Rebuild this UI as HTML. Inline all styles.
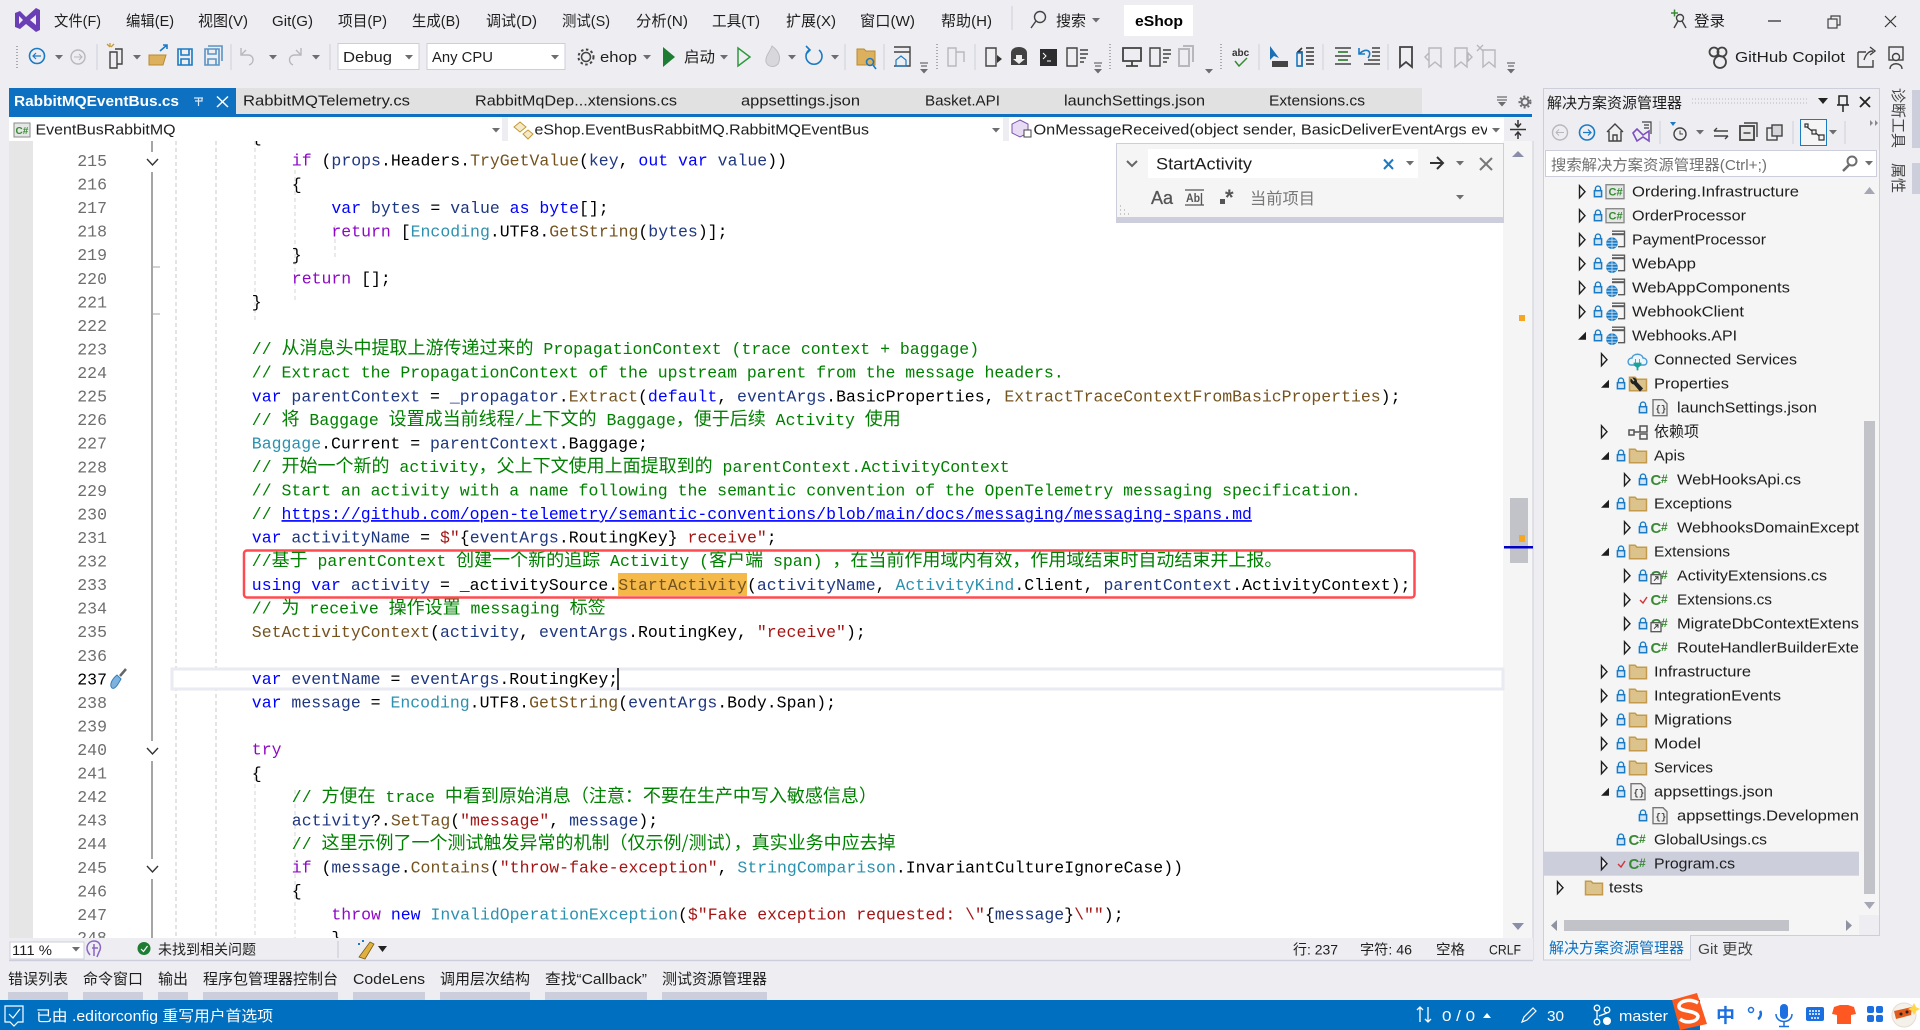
<!DOCTYPE html>
<html lang="zh"><head><meta charset="utf-8"><title>eShop - Visual Studio</title>
<style>
html,body{margin:0;padding:0;background:#eeeef2;overflow:hidden}
svg{display:block}
text{white-space:pre}
.u{font:15px "Liberation Sans","Noto Sans CJK SC",sans-serif;fill:#1e1e1e}
.m{font:16.5px "Liberation Mono","Noto Sans CJK SC",monospace;fill:#000}
.n{font:16.5px "Liberation Mono",monospace;fill:#6e6e6e;text-anchor:end}
.z{font-family:"Noto Sans CJK SC",sans-serif;font-size:18px}
.k{fill:#0000ff}.c{fill:#008000}.t{fill:#2b91af}.s{fill:#a31515}.f{fill:#74531f}.v{fill:#1f377f}.p{fill:#8f08c4}
.l{fill:#0000ff;text-decoration:underline}
.w{font:15px "Liberation Sans","Noto Sans CJK SC",sans-serif;fill:#fff}
.i{fill:none;stroke:#424242;stroke-width:1.4}
.b{fill:none;stroke:#1b7ac4;stroke-width:1.6}
.g{fill:none;stroke:#b8b8bc;stroke-width:1.4}
.tri{fill:#6d6d70}
</style></head><body>
<svg xmlns="http://www.w3.org/2000/svg" width="1920" height="1030" viewBox="0 0 1920 1030">
<defs>
<clipPath id="ed"><rect x="33" y="141" width="1470" height="797"/></clipPath>
<clipPath id="cb3"><rect x="1010" y="117" width="477" height="24"/></clipPath>
<g id="lk"><path d="M-2.6-1V-3a2.6 2.6 0 0 1 5.2 0V-1" fill="none" stroke="#1b7ac4" stroke-width="1.4"/><rect x="-3.6" y="-1" width="7.2" height="6" fill="#cfe6f8" stroke="#1b7ac4" stroke-width="1.5"/></g>
<path id="ex" d="M-2.5-6L3 0L-2.5 6Z" fill="#f5f5f5" stroke="#1e1e1e" stroke-width="1.4"/>
<path id="en" d="M4-4V4H-4Z" fill="#1e1e1e"/>
<path id="fld" d="M-8.5-6.5H-3L-1-4.5H8.5V7H-8.5Z" fill="#dcc38c" stroke="#c49a4c" stroke-width="1.5"/>
<g id="csp"><rect x="-9" y="-7" width="18" height="14" fill="#e4e8e4" stroke="#8a8a8a" stroke-width="1.4"/><text x="-6.5" y="4" style="font:bold 11px 'Liberation Sans',sans-serif;fill:#388a34">C#</text></g>
<g id="web"><path d="M-3-8.5H9.5V7H3" fill="#f5f5f5" stroke="#5a5a5a" stroke-width="1.4"/><path d="M-3-5.5H9.5" stroke="#5a5a5a" stroke-width="2"/><circle cx="-3" cy="3.5" r="5.8" fill="#1b7ac4"/><path d="M-8.8 3.5H2.8M-3-2.3V9.3M-7.5 0.5H1.5M-7.5 6.5H1.5" stroke="#cfe6f8" stroke-width=".8"/></g>
<g id="cs"><text x="-9.5" y="5.5" style="font:bold 15px 'Liberation Sans',sans-serif;fill:#388a34">C</text><text x="1" y="3.5" style="font:bold 12px 'Liberation Sans',sans-serif;fill:#388a34">#</text></g>
<g id="csl"><use href="#cs"/><rect x="-9" y="-1" width="10" height="9" fill="#f5f5f5" stroke="#555" stroke-width="1.3"/><path d="M-6 5L-2 1M-5 1H-2V4" fill="none" stroke="#333" stroke-width="1"/></g>
<g id="js"><path d="M-7-8H3L7-4V8H-7Z" fill="#f0f0f0" stroke="#777" stroke-width="1.4"/><text x="-4.5" y="4" style="font:bold 9px 'Liberation Mono',monospace;fill:#444">{}</text></g>
<path id="dn" d="M-4-2H4L0 2.5Z" class="tri"/>
</defs>

<rect width="1920" height="1030" fill="#eeeef2"/>

<!-- Title / menu -->
<path d="M15 13L20 11L26 17L36 8L40 10V30L36 32L26 24L20 29L15 27Z" fill="#6a3fb5"/><path d="M19 16V24L23 20ZM30 20L36 15V25Z" fill="#eeeef2"/>
<g class="u" style="font-size:15px">
<text class="u" x="54" y="26" textLength="47" lengthAdjust="spacingAndGlyphs">文件(F)</text>
<text class="u" x="126" y="26" textLength="48" lengthAdjust="spacingAndGlyphs">编辑(E)</text>
<text class="u" x="198" y="26" textLength="50" lengthAdjust="spacingAndGlyphs">视图(V)</text>
<text class="u" x="272" y="26" textLength="41" lengthAdjust="spacingAndGlyphs">Git(G)</text>
<text class="u" x="338" y="26" textLength="49" lengthAdjust="spacingAndGlyphs">项目(P)</text>
<text class="u" x="412" y="26" textLength="48" lengthAdjust="spacingAndGlyphs">生成(B)</text>
<text class="u" x="486" y="26" textLength="51" lengthAdjust="spacingAndGlyphs">调试(D)</text>
<text class="u" x="562" y="26" textLength="48" lengthAdjust="spacingAndGlyphs">测试(S)</text>
<text class="u" x="636" y="26" textLength="52" lengthAdjust="spacingAndGlyphs">分析(N)</text>
<text class="u" x="712" y="26" textLength="48" lengthAdjust="spacingAndGlyphs">工具(T)</text>
<text class="u" x="786" y="26" textLength="50" lengthAdjust="spacingAndGlyphs">扩展(X)</text>
<text class="u" x="860" y="26" textLength="55" lengthAdjust="spacingAndGlyphs">窗口(W)</text>
<text class="u" x="941" y="26" textLength="51" lengthAdjust="spacingAndGlyphs">帮助(H)</text>
</g>
<path d="M1012 6V30" stroke="#cccedb"/>
<circle cx="1040" cy="17" r="5.5" class="i"/><path d="M1036 21L1031 28" class="i"/>
<text class="u" x="1056" y="26" textLength="30" lengthAdjust="spacingAndGlyphs">搜索</text><use href="#dn" x="1096" y="20"/>
<rect x="1124" y="5" width="69" height="31" fill="#fff"/>
<text class="u" x="1135" y="26" textLength="48" lengthAdjust="spacingAndGlyphs" style="font-weight:bold;fill:#000">eShop</text>
<path d="M1671 13h7M1674.500 9.500v7" stroke="#388a34" stroke-width="1.500"/><circle cx="1680" cy="18" r="3.500" class="i"/><path d="M1674 28L1678 21M1686 28L1682 21" class="i"/>
<text class="u" x="1694" y="26" textLength="31" lengthAdjust="spacingAndGlyphs">登录</text>
<path d="M1768 21H1781" stroke="#333" stroke-width="1.300"/>
<rect x="1828" y="19" width="9" height="9" class="i" style="stroke-width:1.200"/><path d="M1831 19V16H1840V25H1837" class="i" style="stroke-width:1.200"/>
<path d="M1885 16L1896 27M1896 16L1885 27" stroke="#333" stroke-width="1.200"/>

<!-- Toolbar -->
<path d="M17 46V68" stroke="#a9a9b0" stroke-width="2" stroke-dasharray="1 2"/>
<circle cx="37" cy="56" r="7.500" class="b"/><path d="M41 56H33M36 53L33 56L36 59" class="b" style="stroke-width:1.200"/><use href="#dn" x="59" y="57"/>
<circle cx="78" cy="57" r="7" class="g"/><path d="M74 57H82M79 54L82 57L79 60" class="g" style="stroke-width:1.100"/>
<path d="M97 44V70" stroke="#cccedb"/>
<path d="M110 52H117V68H110ZM115 49H122V64H117" class="i"/><path d="M107 44l3 3M110 43v4M114 44l-3 3" stroke="#c99a30" stroke-width="1.300"/><use href="#dn" x="137" y="57"/>
<path d="M149 65V55H166L163 65Z" fill="#dcb05c" stroke="#b98a30"/><path d="M160 51L167 45M163 45H167V49" class="b"/>
<path d="M178 49H192V65H178ZM181 49V55H189V49M181 65V59H189V65" class="b"/>
<path d="M205 49H219V65H205ZM208 49V54H216V49M208 65V59H216V65" class="b" style="stroke:#5a93c4"/><path d="M208 46H222V61" class="b" style="stroke:#5a93c4"/>
<path d="M231 44V70" stroke="#cccedb"/>
<path d="M241 48V55H248C254 55 255 63 249 65M241 55L246 50" class="g"/><use href="#dn" x="273" y="57"/>
<path d="M301 48V55H295C288 55 288 63 293 65M301 55L296 50" class="g"/><use href="#dn" x="316" y="57"/>
<path d="M330 44V70" stroke="#cccedb"/>
<rect x="338" y="43.500" width="81" height="26" fill="#fff" stroke="#cccedb"/><text class="u" x="343" y="62" textLength="49" lengthAdjust="spacingAndGlyphs">Debug</text><use href="#dn" x="409" y="57"/>
<rect x="427" y="43.500" width="138" height="26" fill="#fff" stroke="#cccedb"/><text class="u" x="432" y="62" textLength="61" lengthAdjust="spacingAndGlyphs">Any CPU</text><use href="#dn" x="555" y="57"/>
<circle cx="586" cy="57" r="4.500" class="i" style="stroke-width:1.500"/><circle cx="586" cy="57" r="7.500" fill="none" stroke="#424242" stroke-width="2" stroke-dasharray="2.500 2.500"/>
<text class="u" x="600" y="62" textLength="37" lengthAdjust="spacingAndGlyphs">ehop</text><use href="#dn" x="647" y="57"/>
<path d="M663 47L675 57L663 67Z" fill="#1e7d32"/>
<text class="u" x="684" y="62" textLength="31" lengthAdjust="spacingAndGlyphs">启动</text><use href="#dn" x="724" y="57"/>
<path d="M738 48L750 57L738 66Z" fill="none" stroke="#2e9a3e" stroke-width="1.500"/>
<path d="M772 46C780 52 781 58 778 64C774 68 768 67 766 62C765 56 770 52 772 46Z" fill="#d8d8dc" stroke="#bdbdc2"/><use href="#dn" x="792" y="57"/>
<path d="M809 50A8 8 0 1 0 819 50" class="b"/><path d="M806 46L810 50L806 54" class="b"/><use href="#dn" x="835" y="57"/>
<path d="M845 44V70" stroke="#cccedb"/>
<path d="M857 49H864L866 51H875V65H857Z" fill="#dcb05c" stroke="#b98a30"/><circle cx="870" cy="62" r="3.500" class="b"/><path d="M873 65L876 69" class="b"/>
<path d="M884 44V70" stroke="#cccedb"/>
<path d="M894 47H910V66H894M894 52H910" class="i"/><path d="M896 66V60L901 56L906 60V66Z" class="b" style="stroke-width:1.200"/>
<path d="M920 63H928M921 66H927" stroke="#6d6d70" stroke-width="1.300"/><use href="#dn" x="924" y="71"/>
<path d="M937 44V70" stroke="#a9a9b0" stroke-width="2" stroke-dasharray="1 2"/>
<path d="M948 48H956V66H948ZM956 52H964V62" class="g"/>
<path d="M975 44V70" stroke="#cccedb"/>
<path d="M986 48H996V66H986Z" class="i"/><path d="M997 55L1002 59L997 63Z" fill="#333"/>
<path d="M1011 53C1011 45 1027 45 1027 53V65H1011Z" fill="#424242"/><path d="M1016 55H1022V59H1025L1019 64L1013 59H1016Z" fill="#eee"/>
<rect x="1040" y="49" width="17" height="17" fill="#2d2d30"/><path d="M1043 53L1046 56L1043 59M1047 61H1051" stroke="#fff" fill="none"/>
<path d="M1067 48H1077V66H1067ZM1080 50H1088M1080 54H1088M1080 58H1086M1080 62H1084" class="i"/>
<path d="M1094 63H1102M1095 66H1101" stroke="#6d6d70" stroke-width="1.300"/><use href="#dn" x="1098" y="71"/>
<path d="M1110 44V70" stroke="#a9a9b0" stroke-width="2" stroke-dasharray="1 2"/>
<path d="M1123 48H1141V61H1123ZM1132 61V66M1126 66H1138" class="i" style="stroke-width:1.800"/>
<path d="M1150 48H1160V66H1150ZM1163 50H1171M1163 54H1171M1163 58H1169M1163 62H1167" class="i"/>
<path d="M1179 49H1189V66H1179ZM1183 46H1193V62" class="g" style="stroke-width:2"/><use href="#dn" x="1209" y="71"/>
<path d="M1221 44V70" stroke="#a9a9b0" stroke-width="2" stroke-dasharray="1 2"/>
<text x="1232" y="56" style="font:bold 10px 'Liberation Sans',sans-serif;fill:#333">abc</text><path d="M1235 61L1239 66L1247 58" fill="none" stroke="#388a34" stroke-width="1.500"/>
<path d="M1259 44V70" stroke="#cccedb"/>
<path d="M1270 46V60L1274 56L1279 58Z" fill="#1b6fb5"/><path d="M1272 61H1288V67H1272Z" fill="#444"/>
<path d="M1297 52H1302V66H1297M1298 52L1302 48M1306 48H1314M1306 52H1314M1306 56H1314M1306 60H1314M1306 64H1314" class="b" style="stroke:#333"/><path d="M1297 53h5v13h-5z" class="b"/>
<path d="M1323 44V70" stroke="#cccedb"/>
<path d="M1335 48H1351M1338 52H1348M1335 56H1351M1338 60H1348M1335 64H1351" stroke="#424242" stroke-width="1.400"/><path d="M1338 52H1348M1338 60H1348" stroke="#388a34" stroke-width="1.400"/>
<path d="M1359 54C1366 47 1373 51 1368 58M1359 48V54H1365" class="b"/><path d="M1372 48H1380M1372 52H1380M1372 56H1380M1368 60H1380M1364 64H1380" stroke="#424242" stroke-width="1.400"/>
<path d="M1388 44V70" stroke="#cccedb"/>
<path d="M1400 47H1412V67L1406 62L1400 67Z" class="i" style="stroke-width:1.800"/>
<path d="M1429 48H1441V67L1435 62L1429 67ZM1425 57L1429 53V61Z" class="g"/>
<path d="M1455 48H1467V67L1461 62L1455 67ZM1472 57L1468 53V61Z" class="g"/>
<path d="M1483 50H1495V67L1489 62L1483 67ZM1477 45L1483 51M1483 45L1477 51" class="g"/>
<path d="M1507 63H1515M1508 66H1514" stroke="#6d6d70" stroke-width="1.300"/><use href="#dn" x="1511" y="71"/>
<circle cx="1714" cy="52" r="4.500" class="i" style="stroke-width:1.800"/><circle cx="1722" cy="52" r="4.500" class="i" style="stroke-width:1.800"/><circle cx="1720" cy="62" r="6" class="i" style="stroke-width:1.800"/>
<text class="u" x="1735" y="62" textLength="110" lengthAdjust="spacingAndGlyphs">GitHub Copilot</text>
<path d="M1858 52H1866M1858 52V67H1873V60M1864 60C1866 53 1870 51 1873 51M1870 47L1875 51L1870 55" class="i"/>
<rect x="1889" y="47" width="14" height="13" class="i"/><circle cx="1896" cy="57" r="3.500" class="i" style="fill:#eeeef2"/><path d="M1890 69C1890 62 1902 62 1902 69" class="i"/>

<!-- Document tabs -->
<rect x="236" y="88" width="1186" height="26" fill="#e1e1e1"/>
<rect x="9" y="88" width="227" height="26" fill="#0e70c0"/>
<rect x="9" y="114" width="1523" height="3" fill="#0e70c0"/>
<text class="w" x="14" y="106" textLength="165" lengthAdjust="spacingAndGlyphs" style="font-weight:bold">RabbitMQEventBus.cs</text>
<path d="M194 98H203M198.500 98V106M195 101H202V98" stroke="#d6e6f5" stroke-width="1.200" fill="none"/>
<path d="M217 96.500L228 107M228 96.500L217 107" stroke="#fff" stroke-width="1.500"/>
<text class="u" x="243" y="105.500" textLength="167" lengthAdjust="spacingAndGlyphs">RabbitMQTelemetry.cs</text>
<text class="u" x="475" y="105.500" textLength="202" lengthAdjust="spacingAndGlyphs">RabbitMqDep...xtensions.cs</text>
<text class="u" x="741" y="105.500" textLength="119" lengthAdjust="spacingAndGlyphs">appsettings.json</text>
<text class="u" x="925" y="105.500" textLength="75" lengthAdjust="spacingAndGlyphs">Basket.API</text>
<text class="u" x="1064" y="105.500" textLength="141" lengthAdjust="spacingAndGlyphs">launchSettings.json</text>
<text class="u" x="1269" y="105.500" textLength="96" lengthAdjust="spacingAndGlyphs">Extensions.cs</text>
<path d="M1497 97H1507M1497 100H1507" stroke="#6d6d70" stroke-width="1.300"/><use href="#dn" x="1502" y="104"/>
<circle cx="1525" cy="102" r="3.500" fill="none" stroke="#6d6d70" stroke-width="2"/><circle cx="1525" cy="102" r="5.500" fill="none" stroke="#6d6d70" stroke-width="2" stroke-dasharray="2 2"/>

<!-- Editor -->
<rect x="9" y="141" width="24" height="797" fill="#e6e6e6"/>
<rect x="33" y="141" width="1470" height="797" fill="#fff"/>
<rect x="1503" y="141" width="30" height="797" fill="#f5f5f5"/>
<path d="M1533 141V960" stroke="#cccedb"/>
<path d="M152 141V938" stroke="#a5a5a5" stroke-width="2"/>
<path d="M152 267H160M152 314H160" stroke="#a5a5a5"/>
<path d="M176 141V938M216 141V938" stroke="#c8c8c8" stroke-dasharray="4 3"/>
<path d="M255 141V320M295 170V300M255 770V938M295 790V938" stroke="#d4d4d4" stroke-dasharray="4 3"/>
<path d="M335 225V260" stroke="#d4d4d4" stroke-dasharray="4 3"/>
<rect x="146" y="152" width="13" height="20" fill="#fff"/><path d="M147 159L152.500 165L158 159" fill="none" stroke="#333" stroke-width="1.400"/>
<rect x="146" y="741" width="13" height="20" fill="#fff"/><path d="M147 748L152.500 754L158 748" fill="none" stroke="#333" stroke-width="1.400"/>
<rect x="146" y="859" width="13" height="20" fill="#fff"/><path d="M147 866L152.500 872L158 866" fill="none" stroke="#333" stroke-width="1.400"/>

<rect x="172" y="669" width="1331" height="20" fill="#fff" stroke="#eaeaf2" stroke-width="3"/>
<rect x="618" y="573" width="129" height="23" fill="#f5b94a"/>

<g transform="translate(0 -1.200)">
<text class="n" x="107" y="167.200">215</text><text class="n" x="107" y="190.800">216</text><text class="n" x="107" y="214.300">217</text><text class="n" x="107" y="237.900">218</text><text class="n" x="107" y="261.400">219</text><text class="n" x="107" y="285">220</text><text class="n" x="107" y="308.600">221</text><text class="n" x="107" y="332.100">222</text><text class="n" x="107" y="355.700">223</text><text class="n" x="107" y="379.200">224</text><text class="n" x="107" y="402.800">225</text><text class="n" x="107" y="426.400">226</text><text class="n" x="107" y="449.900">227</text><text class="n" x="107" y="473.500">228</text><text class="n" x="107" y="497">229</text><text class="n" x="107" y="520.600">230</text><text class="n" x="107" y="544.200">231</text><text class="n" x="107" y="567.700">232</text><text class="n" x="107" y="591.300">233</text><text class="n" x="107" y="614.800">234</text><text class="n" x="107" y="638.400">235</text><text class="n" x="107" y="662">236</text><text class="n" x="107" y="685.500" style="fill:#000">237</text><text class="n" x="107" y="709.100">238</text><text class="n" x="107" y="732.600">239</text><text class="n" x="107" y="756.200">240</text><text class="n" x="107" y="779.800">241</text><text class="n" x="107" y="803.300">242</text><text class="n" x="107" y="826.900">243</text><text class="n" x="107" y="850.400">244</text><text class="n" x="107" y="874">245</text><text class="n" x="107" y="897.600">246</text><text class="n" x="107" y="921.100">247</text>
</g>
<g clip-path="url(#ed)">
<g transform="translate(0.800 -1.500)">
<text class="n" x="106" y="944.700">248</text>
<text class="m" x="251" y="143.600">{</text>
<text class="m" x="291" y="167.200"><tspan class="p">if</tspan> (<tspan class="v">props</tspan>.Headers.<tspan class="f">TryGetValue</tspan>(<tspan class="v">key</tspan>, <tspan class="k">out</tspan> <tspan class="k">var</tspan> <tspan class="v">value</tspan>))</text>
<text class="m" x="291" y="190.800">{</text>
<text class="m" x="330.600" y="214.300"><tspan class="k">var</tspan> <tspan class="v">bytes</tspan> = <tspan class="v">value</tspan> <tspan class="k">as</tspan> <tspan class="k">byte</tspan>[];</text>
<text class="m" x="330.600" y="237.900"><tspan class="p">return</tspan> [<tspan class="t">Encoding</tspan>.UTF8.<tspan class="f">GetString</tspan>(<tspan class="v">bytes</tspan>)];</text>
<text class="m" x="291" y="261.400">}</text>
<text class="m" x="291" y="285"><tspan class="p">return</tspan> [];</text>
<text class="m" x="251" y="308.600">}</text>
<text class="m c" x="251" y="355.700">// <tspan class="z">从消息头中提取上游传递过来的</tspan> PropagationContext (trace context + baggage)</text>
<text class="m c" x="251" y="379.200">// Extract the PropagationContext of the upstream parent from the message headers.</text>
<text class="m" x="251" y="402.800"><tspan class="k">var</tspan> <tspan class="v">parentContext</tspan> = <tspan class="v">_propagator</tspan>.<tspan class="f">Extract</tspan>(<tspan class="k">default</tspan>, <tspan class="v">eventArgs</tspan>.BasicProperties, <tspan class="f">ExtractTraceContextFromBasicProperties</tspan>);</text>
<text class="m c" x="251" y="426.400">// <tspan class="z">将</tspan> Baggage <tspan class="z">设置成当前线程</tspan>/<tspan class="z">上下文的</tspan> Baggage<tspan class="z">，便于后续</tspan> Activity <tspan class="z">使用</tspan></text>
<text class="m" x="251" y="449.900"><tspan class="t">Baggage</tspan>.Current = <tspan class="v">parentContext</tspan>.Baggage;</text>
<text class="m c" x="251" y="473.500">// <tspan class="z">开始一个新的</tspan> activity<tspan class="z">，父上下文使用上面提取到的</tspan> parentContext.ActivityContext</text>
<text class="m c" x="251" y="497">// Start an activity with a name following the semantic convention of the OpenTelemetry messaging specification.</text>
<text class="m c" x="251" y="520.600">// <tspan class="l">https://github.com/open-telemetry/semantic-conventions/blob/main/docs/messaging/messaging-spans.md</tspan></text>
<text class="m" x="251" y="544.200"><tspan class="k">var</tspan> <tspan class="v">activityName</tspan> = <tspan class="s">$"</tspan>{<tspan class="v">eventArgs</tspan>.RoutingKey}<tspan class="s"> receive"</tspan>;</text>
<text class="m c" x="251" y="567.700">//<tspan class="z">基于</tspan> parentContext <tspan class="z">创建一个新的追踪</tspan> Activity (<tspan class="z">客户端</tspan> span) <tspan class="z">，在当前作用域内有效，作用域结束时自动结束并上报。</tspan></text>
<text class="m" x="251" y="591.300"><tspan class="k">using</tspan> <tspan class="k">var</tspan> <tspan class="v">activity</tspan> = _activitySource.<tspan class="f">StartActivity</tspan>(<tspan class="v">activityName</tspan>, <tspan class="t">ActivityKind</tspan>.Client, <tspan class="v">parentContext</tspan>.ActivityContext);</text>
<text class="m c" x="251" y="614.800">// <tspan class="z">为</tspan> receive <tspan class="z">操作设置</tspan> messaging <tspan class="z">标签</tspan></text>
<text class="m" x="251" y="638.400"><tspan class="f">SetActivityContext</tspan>(<tspan class="v">activity</tspan>, <tspan class="v">eventArgs</tspan>.RoutingKey, <tspan class="s">"receive"</tspan>);</text>
<text class="m" x="251" y="685.500"><tspan class="k">var</tspan> <tspan class="v">eventName</tspan> = <tspan class="v">eventArgs</tspan>.RoutingKey;</text>
<text class="m" x="251" y="709.100"><tspan class="k">var</tspan> <tspan class="v">message</tspan> = <tspan class="t">Encoding</tspan>.UTF8.<tspan class="f">GetString</tspan>(<tspan class="v">eventArgs</tspan>.Body.Span);</text>
<text class="m" x="251" y="756.200"><tspan class="p">try</tspan></text>
<text class="m" x="251" y="779.800">{</text>
<text class="m c" x="291" y="803.300">// <tspan class="z">方便在</tspan> trace <tspan class="z">中看到原始消息（注意：不要在生产中写入敏感信息）</tspan></text>
<text class="m" x="291" y="826.900"><tspan class="v">activity</tspan>?.<tspan class="f">SetTag</tspan>(<tspan class="s">"message"</tspan>, <tspan class="v">message</tspan>);</text>
<text class="m c" x="291" y="850.400">// <tspan class="z">这里示例了一个测试触发异常的机制（仅示例/测试），真实业务中应去掉</tspan></text>
<text class="m" x="291" y="874"><tspan class="p">if</tspan> (<tspan class="v">message</tspan>.<tspan class="f">Contains</tspan>(<tspan class="s">"throw-fake-exception"</tspan>, <tspan class="t">StringComparison</tspan>.InvariantCultureIgnoreCase))</text>
<text class="m" x="291" y="897.600">{</text>
<text class="m" x="330.600" y="921.100"><tspan class="p">throw</tspan> <tspan class="k">new</tspan> <tspan class="t">InvalidOperationException</tspan>(<tspan class="s">$"Fake exception requested: \"</tspan>{<tspan class="v">message</tspan>}<tspan class="s">\""</tspan>);</text>
<text class="m" x="330.600" y="944.700">}</text>
</g>
</g>
<path d="M618 668V690" stroke="#000" stroke-width="1.500"/>
<rect x="244" y="550.500" width="1170.500" height="47" rx="3" fill="none" stroke="#ff4b50" stroke-width="2.500"/>
<g transform="translate(120 680)"><path d="M-8 8C-11 5-8-1-3-5L1-1C-2 4-5 10-8 8Z" fill="#7fb3de" stroke="#2f7fbf"/><path d="M0-4L6-11" stroke="#666" stroke-width="2.500"/></g>

<!-- Editor scrollbar -->
<path d="M1512 157H1524L1518 151Z" fill="#8a8ea8"/>
<path d="M1512 923H1524L1518 930Z" fill="#8a8ea8"/>
<rect x="1510" y="498" width="18" height="65" fill="#c2c3c9"/>
<rect x="1519" y="315" width="6" height="6" fill="#f5a623"/>
<rect x="1519" y="535" width="6" height="7" fill="#f5a623"/>
<rect x="1504" y="546" width="29" height="2.500" fill="#0000c8"/>

<!-- Find widget -->
<rect x="1116.500" y="143.500" width="387" height="79" fill="#f5f5f5" stroke="#cccedb"/>
<rect x="1117" y="217" width="386" height="5" fill="#cccedb"/>
<path d="M1127 161L1132 166L1137 161" fill="none" stroke="#666" stroke-width="2"/>
<rect x="1148" y="149" width="270" height="29" fill="#fff"/>
<text class="u" x="1156" y="169.500" style="font-size:17px" textLength="96" lengthAdjust="spacingAndGlyphs">StartActivity</text>
<path d="M1384 159.500L1393 169M1393 159.500L1384 169" stroke="#1b7ac4" stroke-width="2"/>
<use href="#dn" x="1410" y="163"/>
<path d="M1430 163H1443M1437 157L1443 163L1437 169" fill="none" stroke="#333" stroke-width="2"/>
<use href="#dn" x="1460" y="163"/>
<path d="M1480 158L1492 170M1492 158L1480 170" stroke="#777" stroke-width="2"/>
<text x="1151" y="204" style="font:18px 'Liberation Sans',sans-serif;fill:#555;stroke:#555;stroke-width:.3">Aa</text>
<text x="1186" y="202" style="font:bold 12px 'Liberation Sans',sans-serif;fill:#555" textLength="17" lengthAdjust="spacingAndGlyphs">Ab|</text><path d="M1185 190H1204M1185 205H1204" stroke="#555" stroke-width="1.200"/>
<rect x="1220" y="199" width="5" height="5" fill="#555"/><text x="1225" y="205" style="font:bold 22px 'Liberation Sans',sans-serif;fill:#555">*</text>
<text class="u" x="1250" y="204" style="font-size:16px;fill:#777" textLength="65" lengthAdjust="spacingAndGlyphs">当前项目</text>
<use href="#dn" x="1460" y="197"/>
<path d="M1120 206h1M1120 210h1M1120 214h1M1124 210h1M1124 214h1M1128 214h1" stroke="#999"/>

<!-- Nav bar -->
<rect x="9" y="117" width="1523" height="24" fill="#eeeef2"/>
<rect x="9" y="117" width="493" height="24" fill="#fff"/>
<rect x="508" y="117" width="495" height="24" fill="#fff"/>
<rect x="1009" y="117" width="495" height="24" fill="#fff"/>
<rect x="14" y="123" width="16" height="14" fill="#e4e8e4" stroke="#8a8a8a"/><text x="15.500" y="134" style="font:bold 10px 'Liberation Sans',sans-serif;fill:#388a34">C#</text>
<text class="u" x="35.500" y="134.500" textLength="140" lengthAdjust="spacingAndGlyphs">EventBusRabbitMQ</text>
<use href="#dn" x="496" y="130"/>
<path d="M520 122L526 127L520 132L514 127ZM528 130L533 134L528 139L523 134Z" fill="#f5e9c8" stroke="#c49a30"/>
<text class="u" x="534.500" y="134.500" textLength="334.500" lengthAdjust="spacingAndGlyphs">eShop.EventBusRabbitMQ.RabbitMQEventBus</text>
<use href="#dn" x="996" y="130"/>
<path d="M1020 120L1028 124V133L1020 137L1012 133V124Z" fill="#e7dcf4" stroke="#7b52ab"/><rect x="1024" y="130" width="7" height="7" fill="#fff" stroke="#444"/>
<g clip-path="url(#cb3)"><text class="u" x="1033.500" y="134.500" textLength="464" lengthAdjust="spacingAndGlyphs">OnMessageReceived(object sender, BasicDeliverEventArgs eve</text></g>
<use href="#dn" x="1496" y="130"/>
<path d="M1510 129.500H1526M1518 120V126M1515 123.500L1518 127L1521 123.500M1518 139V133M1515 135.500L1518 132L1521 135.500" fill="none" stroke="#333" stroke-width="1.500"/>

<!-- Editor status row -->
<rect x="9" y="938" width="1524" height="22" fill="#eeeef2"/>
<path d="M9 960.500H1533" stroke="#cccedb" stroke-width="1.500"/>
<rect x="10" y="942" width="74" height="17" fill="#fff" stroke="#cccedb"/>
<text class="u" x="12" y="955" style="font-size:14px" textLength="40" lengthAdjust="spacingAndGlyphs">111 %</text>
<use href="#dn" x="76" y="949"/>
<path d="M90 955C84 948 88 941 94 941C100 941 102 947 99 952L97 957M92 948H98M94 944V956" fill="none" stroke="#8a64c4" stroke-width="1.500"/>
<circle cx="144" cy="948.500" r="6.500" fill="#1e7d32"/><path d="M141 949L143.500 951.500L147.500 946" fill="none" stroke="#fff" stroke-width="1.200"/>
<text class="u" x="158" y="954.500" style="font-size:14px" textLength="98" lengthAdjust="spacingAndGlyphs">未找到相关问题</text>
<path d="M338 941V958" stroke="#cccedb" stroke-width="1.200"/>
<path d="M359 957L370 942L374 944L365 959Z" fill="#e0b040" stroke="#7a5c18" stroke-width=".8"/><path d="M358 944h2M362 941h2" stroke="#1b7ac4" stroke-width="2"/>
<path d="M378 946H387L382.500 952Z" fill="#222"/>
<text class="u" x="1293" y="954.500" style="font-size:14px" textLength="45" lengthAdjust="spacingAndGlyphs">行: 237</text>
<text class="u" x="1360" y="954.500" style="font-size:14px" textLength="52" lengthAdjust="spacingAndGlyphs">字符: 46</text>
<text class="u" x="1436" y="954.500" style="font-size:14px" textLength="29" lengthAdjust="spacingAndGlyphs">空格</text>
<text class="u" x="1489" y="954.500" style="font-size:14px" textLength="32" lengthAdjust="spacingAndGlyphs">CRLF</text>

<!-- Bottom tabs -->
<g fill="#cccedb"><rect x="8" y="992" width="60" height="8"/><rect x="83" y="992" width="60" height="8"/><rect x="158" y="992" width="30" height="8"/><rect x="203" y="992" width="135" height="8"/><rect x="353" y="992" width="72" height="8"/><rect x="440" y="992" width="90" height="8"/><rect x="545" y="992" width="102" height="8"/><rect x="662" y="992" width="105" height="8"/></g>
<text class="u" x="8" y="984" textLength="60" lengthAdjust="spacingAndGlyphs">错误列表</text>
<text class="u" x="83" y="984" textLength="60" lengthAdjust="spacingAndGlyphs">命令窗口</text>
<text class="u" x="158" y="984" textLength="30" lengthAdjust="spacingAndGlyphs">输出</text>
<text class="u" x="203" y="984" textLength="135" lengthAdjust="spacingAndGlyphs">程序包管理器控制台</text>
<text class="u" x="353" y="984" textLength="72" lengthAdjust="spacingAndGlyphs">CodeLens</text>
<text class="u" x="440" y="984" textLength="90" lengthAdjust="spacingAndGlyphs">调用层次结构</text>
<text class="u" x="545" y="984" textLength="102" lengthAdjust="spacingAndGlyphs">查找“Callback”</text>
<text class="u" x="662" y="984" textLength="105" lengthAdjust="spacingAndGlyphs">测试资源管理器</text>

<!-- Solution Explorer -->
<rect x="1543.500" y="88.500" width="336" height="847" fill="#f5f5f5" stroke="#cccedb"/>
<rect x="1544" y="89" width="335" height="27" fill="#eeeef2"/>
<text class="u" x="1547" y="108" textLength="135" lengthAdjust="spacingAndGlyphs">解决方案资源管理器</text>
<path d="M1692 99H1808M1692 103H1808" stroke="#b5b5bd" stroke-dasharray="1 2"/>
<path d="M1818 98H1828L1823 104Z" fill="#222"/>
<path d="M1839 96H1847V105H1839ZM1837 105H1849M1843 105V112" fill="none" stroke="#222" stroke-width="1.500"/>
<path d="M1860 97L1870 107M1870 97L1860 107" stroke="#222" stroke-width="1.800"/>
<rect x="1544" y="116" width="335" height="34" fill="#eeeef2"/>
<circle cx="1560" cy="132.500" r="7.500" class="g"/><path d="M1564 132.500H1556M1559 129.500L1556 132.500L1559 135.500" class="g" style="stroke-width:1"/>
<circle cx="1587" cy="132.500" r="7.500" class="b"/><path d="M1583 132.500H1591M1588 129.500L1591 132.500L1588 135.500" class="b" style="stroke-width:1.200"/>
<path d="M1607 132L1615 124L1623 132M1609 131V141H1621V131M1613 141V135H1617V141" class="i"/>
<path d="M1633 133L1637 129L1643 135L1649 131V141L1643 137L1637 141Z" fill="none" stroke="#7d4fc0" stroke-width="1.600"/><path d="M1642 122H1651V134M1644 125H1649M1644 128H1649" class="i" style="stroke-width:1.200"/>
<path d="M1660 121V144" stroke="#cccedb"/>
<path d="M1670 122H1676L1673 126Z" fill="#1b7ac4"/><circle cx="1680" cy="134" r="6" class="i"/><path d="M1680 130.500V134H1683" class="i" style="stroke-width:1"/>
<use href="#dn" x="1700" y="132"/>
<path d="M1714 131H1728M1714 131L1717 128M1728 136H1714M1728 136L1725 139" class="i"/>
<rect x="1740" y="126" width="14" height="14" class="i" style="fill:#e6e6e6;stroke-width:1.800"/><path d="M1744 123H1757V137M1743.500 133H1750.500" class="i"/>
<rect x="1767" y="128" width="10" height="12" class="i"/><rect x="1772" y="125" width="10" height="11" class="i" style="fill:#d6d6da"/>
<path d="M1793 121V144" stroke="#cccedb"/>
<rect x="1800.500" y="119.500" width="26" height="26" fill="#f5f5f5" stroke="#1b7ac4"/>
<path d="M1805 124h3v3h-3zM1812 130h4v4h-4zM1819 135h5v5h-5zM1807 127L1812 131M1816 133L1819 136" fill="none" stroke="#333" stroke-width="1.200"/>
<use href="#dn" x="1833" y="132"/><path d="M1845 121V144" stroke="#cccedb"/>
<path d="M1870 120L1873 123L1870 126ZM1875 120L1878 123L1875 126Z" fill="#888"/>
<rect x="1545.500" y="150.500" width="331" height="26" fill="#fff" stroke="#cccedb"/>
<text class="u" x="1551" y="170" style="fill:#717171" textLength="216" lengthAdjust="spacingAndGlyphs">搜索解决方案资源管理器(Ctrl+;)</text>
<circle cx="1852" cy="161" r="4.500" fill="none" stroke="#6d6d70" stroke-width="2"/><path d="M1849 165L1843 171" stroke="#6d6d70" stroke-width="2.500"/>
<use href="#dn" x="1869" y="163"/>

<rect x="1543.500" y="851.700" width="315.500" height="24" fill="#cccedb"/>
<rect x="1864" y="421" width="11" height="473" fill="#c2c3c9"/>
<path d="M1864 194H1875L1869.500 187Z" fill="#a5a7b5"/>
<path d="M1864 902H1875L1869.500 909Z" fill="#a5a7b5"/>
<rect x="1564" y="920" width="225" height="11" fill="#c2c3c9"/>
<path d="M1557 920V931L1551 925.500Z" fill="#8f92a0"/><path d="M1846 920V931L1852 925.500Z" fill="#8f92a0"/>
<rect x="1859" y="915" width="20" height="20" fill="#eeeef2"/>

<use href="#ex" x="1582" y="191.700"/><use href="#lk" x="1598" y="191.700"/><use href="#csp" x="1615" y="191.700"/><text class="u" x="1632" y="196.700" textLength="167" lengthAdjust="spacingAndGlyphs">Ordering.Infrastructure</text>
<use href="#ex" x="1582" y="215.700"/><use href="#lk" x="1598" y="215.700"/><use href="#csp" x="1615" y="215.700"/><text class="u" x="1632" y="220.700" textLength="114" lengthAdjust="spacingAndGlyphs">OrderProcessor</text>
<use href="#ex" x="1582" y="239.700"/><use href="#lk" x="1598" y="239.700"/><use href="#web" x="1615" y="239.700"/><text class="u" x="1632" y="244.700" textLength="134" lengthAdjust="spacingAndGlyphs">PaymentProcessor</text>
<use href="#ex" x="1582" y="263.700"/><use href="#lk" x="1598" y="263.700"/><use href="#web" x="1615" y="263.700"/><text class="u" x="1632" y="268.700" textLength="64" lengthAdjust="spacingAndGlyphs">WebApp</text>
<use href="#ex" x="1582" y="287.700"/><use href="#lk" x="1598" y="287.700"/><use href="#web" x="1615" y="287.700"/><text class="u" x="1632" y="292.700" textLength="158" lengthAdjust="spacingAndGlyphs">WebAppComponents</text>
<use href="#ex" x="1582" y="311.700"/><use href="#lk" x="1598" y="311.700"/><use href="#web" x="1615" y="311.700"/><text class="u" x="1632" y="316.700" textLength="112" lengthAdjust="spacingAndGlyphs">WebhookClient</text>
<use href="#en" x="1582" y="335.700"/><use href="#lk" x="1598" y="335.700"/><use href="#web" x="1615" y="335.700"/><text class="u" x="1632" y="340.700" textLength="105" lengthAdjust="spacingAndGlyphs">Webhooks.API</text>
<use href="#ex" x="1604" y="359.700"/><path d="M1631 365C1627 365 1627 358 1632 358C1633 353 1642 353 1643 358C1648 358 1648 365 1644 365Z" fill="#eef5fb" stroke="#4a9ad4" stroke-width="1.400"/><path d="M1635.500 359V363M1639.500 359V363M1634 363H1641V365L1638 367.500V370H1637V367.500L1634 365Z" fill="#1ba39c" stroke="#1ba39c" stroke-width=".8"/><text class="u" x="1654" y="364.700" textLength="143" lengthAdjust="spacingAndGlyphs">Connected Services</text>
<use href="#en" x="1605" y="383.700"/><use href="#lk" x="1621" y="383.700"/><use href="#fld" x="1638" y="383.700"/><path d="M1631 379C1630 382 1632 384 1634 384L1640 391L1642.500 388.500L1636.500 382C1637 380 1635.500 378 1633 378L1635 380.500L1633.500 382Z" fill="#222" stroke="#222" stroke-width=".8"/><text class="u" x="1654" y="388.700" textLength="75" lengthAdjust="spacingAndGlyphs">Properties</text>
<use href="#lk" x="1643" y="407.700"/><use href="#js" x="1660" y="407.700"/><text class="u" x="1677" y="412.700" textLength="140" lengthAdjust="spacingAndGlyphs">launchSettings.json</text>
<use href="#ex" x="1604" y="431.700"/><path d="M1629 430h5v5h-5zM1640 426h7v6h-7zM1640 434h7v5h-7zM1634 432H1640" fill="none" stroke="#555" stroke-width="1.500"/><text class="u" x="1654" y="436.700" textLength="45" lengthAdjust="spacingAndGlyphs">依赖项</text>
<use href="#en" x="1605" y="455.700"/><use href="#lk" x="1621" y="455.700"/><use href="#fld" x="1638" y="455.700"/><text class="u" x="1654" y="460.700" textLength="31" lengthAdjust="spacingAndGlyphs">Apis</text>
<use href="#ex" x="1627" y="479.700"/><use href="#lk" x="1643" y="479.700"/><use href="#cs" x="1660" y="479.700"/><text class="u" x="1677" y="484.700" textLength="124" lengthAdjust="spacingAndGlyphs">WebHooksApi.cs</text>
<use href="#en" x="1605" y="503.700"/><use href="#lk" x="1621" y="503.700"/><use href="#fld" x="1638" y="503.700"/><text class="u" x="1654" y="508.700" textLength="78" lengthAdjust="spacingAndGlyphs">Exceptions</text>
<use href="#ex" x="1627" y="527.700"/><use href="#lk" x="1643" y="527.700"/><use href="#cs" x="1660" y="527.700"/><text class="u" x="1677" y="532.700" textLength="182" lengthAdjust="spacingAndGlyphs">WebhooksDomainExcept</text>
<use href="#en" x="1605" y="551.700"/><use href="#lk" x="1621" y="551.700"/><use href="#fld" x="1638" y="551.700"/><text class="u" x="1654" y="556.700" textLength="76" lengthAdjust="spacingAndGlyphs">Extensions</text>
<use href="#ex" x="1627" y="575.700"/><use href="#lk" x="1643" y="575.700"/><use href="#csl" x="1660" y="575.700"/><text class="u" x="1677" y="580.700" textLength="150" lengthAdjust="spacingAndGlyphs">ActivityExtensions.cs</text>
<use href="#ex" x="1627" y="599.700"/><path d="M1640 600L1643 603L1647 597" fill="none" stroke="#d13438" stroke-width="1.400"/><use href="#cs" x="1660" y="599.700"/><text class="u" x="1677" y="604.700" textLength="95" lengthAdjust="spacingAndGlyphs">Extensions.cs</text>
<use href="#ex" x="1627" y="623.700"/><use href="#lk" x="1643" y="623.700"/><use href="#csl" x="1660" y="623.700"/><text class="u" x="1677" y="628.700" textLength="182" lengthAdjust="spacingAndGlyphs">MigrateDbContextExtens</text>
<use href="#ex" x="1627" y="647.700"/><use href="#lk" x="1643" y="647.700"/><use href="#cs" x="1660" y="647.700"/><text class="u" x="1677" y="652.700" textLength="182" lengthAdjust="spacingAndGlyphs">RouteHandlerBuilderExte</text>
<use href="#ex" x="1604" y="671.700"/><use href="#lk" x="1621" y="671.700"/><use href="#fld" x="1638" y="671.700"/><text class="u" x="1654" y="676.700" textLength="97" lengthAdjust="spacingAndGlyphs">Infrastructure</text>
<use href="#ex" x="1604" y="695.700"/><use href="#lk" x="1621" y="695.700"/><use href="#fld" x="1638" y="695.700"/><text class="u" x="1654" y="700.700" textLength="127" lengthAdjust="spacingAndGlyphs">IntegrationEvents</text>
<use href="#ex" x="1604" y="719.700"/><use href="#lk" x="1621" y="719.700"/><use href="#fld" x="1638" y="719.700"/><text class="u" x="1654" y="724.700" textLength="78" lengthAdjust="spacingAndGlyphs">Migrations</text>
<use href="#ex" x="1604" y="743.700"/><use href="#lk" x="1621" y="743.700"/><use href="#fld" x="1638" y="743.700"/><text class="u" x="1654" y="748.700" textLength="47" lengthAdjust="spacingAndGlyphs">Model</text>
<use href="#ex" x="1604" y="767.700"/><use href="#lk" x="1621" y="767.700"/><use href="#fld" x="1638" y="767.700"/><text class="u" x="1654" y="772.700" textLength="59" lengthAdjust="spacingAndGlyphs">Services</text>
<use href="#en" x="1605" y="791.700"/><use href="#lk" x="1621" y="791.700"/><use href="#js" x="1638" y="791.700"/><text class="u" x="1654" y="796.700" textLength="119" lengthAdjust="spacingAndGlyphs">appsettings.json</text>
<use href="#lk" x="1643" y="815.700"/><use href="#js" x="1660" y="815.700"/><text class="u" x="1677" y="820.700" textLength="182" lengthAdjust="spacingAndGlyphs">appsettings.Developmen</text>
<use href="#lk" x="1621" y="839.700"/><use href="#cs" x="1638" y="839.700"/><text class="u" x="1654" y="844.700" textLength="113" lengthAdjust="spacingAndGlyphs">GlobalUsings.cs</text>
<use href="#ex" x="1604" y="863.700"/><path d="M1618 864L1621 867L1625 861" fill="none" stroke="#d13438" stroke-width="1.400"/><use href="#cs" x="1638" y="863.700"/><text class="u" x="1654" y="868.700" textLength="81" lengthAdjust="spacingAndGlyphs">Program.cs</text>
<use href="#ex" x="1560" y="887.700"/><use href="#fld" x="1594" y="887.700"/><text class="u" x="1609" y="892.700" textLength="34" lengthAdjust="spacingAndGlyphs">tests</text>

<rect x="1543.500" y="936" width="147" height="24" fill="#f5f5f5" stroke="#cccedb"/>
<rect x="1544" y="934" width="146" height="3" fill="#f5f5f5"/>
<text class="u" x="1549" y="953" style="fill:#0e70c0" textLength="135" lengthAdjust="spacingAndGlyphs">解决方案资源管理器</text>
<text class="u" x="1698" y="954" style="fill:#444" textLength="55" lengthAdjust="spacingAndGlyphs">Git 更改</text>

<!-- Right vertical tabs -->
<rect x="1912" y="90" width="8" height="58" fill="#cccedb"/><rect x="1912" y="163" width="8" height="31" fill="#cccedb"/>
<text class="u" transform="translate(1893 88) rotate(90)" style="font-size:15px;fill:#444" textLength="60" lengthAdjust="spacingAndGlyphs">诊断工具</text>
<text class="u" transform="translate(1893 163) rotate(90)" style="font-size:15px;fill:#444" textLength="30" lengthAdjust="spacingAndGlyphs">属性</text>

<!-- Status bar -->
<rect x="0" y="1000" width="1920" height="30" fill="#006fbf"/>
<path d="M5 1006H23V1022H18L14 1026L10 1022H5Z" fill="none" stroke="#fff" stroke-width="1.200"/><path d="M9 1014L13 1018L20 1009" fill="none" stroke="#fff" stroke-width="1.200"/>
<text class="w" x="36" y="1021" textLength="237" lengthAdjust="spacingAndGlyphs">已由 .editorconfig 重写用户首选项</text>
<path d="M1420 1007V1022M1417 1010L1420 1007L1423 1010M1428 1007V1022M1425 1019L1428 1022L1431 1019" fill="none" stroke="#fff" stroke-width="1.300"/>
<text class="w" x="1442" y="1021" textLength="33" lengthAdjust="spacingAndGlyphs">0 / 0</text>
<path d="M1483 1018H1491L1487 1013Z" fill="#fff"/>
<path d="M1522 1022L1524 1017L1533 1008L1536 1011L1527 1020Z" fill="none" stroke="#fff" stroke-width="1.200"/>
<text class="w" x="1547" y="1021" textLength="17" lengthAdjust="spacingAndGlyphs">30</text>
<circle cx="1597" cy="1008" r="2.800" fill="none" stroke="#fff" stroke-width="1.300"/><circle cx="1597" cy="1022" r="2.800" fill="none" stroke="#fff" stroke-width="1.300"/><circle cx="1607" cy="1010" r="2.800" fill="none" stroke="#fff" stroke-width="1.300"/><circle cx="1607" cy="1021" r="4" fill="#fff"/><path d="M1597 1011V1019M1599 1016L1607 1013" stroke="#fff" stroke-width="1.300"/>
<text class="w" x="1619" y="1021" textLength="49" lengthAdjust="spacingAndGlyphs">master</text>
<rect x="1700" y="998" width="220" height="32" fill="#fff"/>
<path d="M1672 1000L1697 993L1707 1024L1680 1030Z" fill="#fb5a1e"/>
<path d="M1698 1003C1690 998 1678 1001 1679 1007C1680 1012 1696 1010 1698 1016C1698 1022 1686 1024 1680 1019" fill="none" stroke="#fff" stroke-width="3.500"/>
<text x="1716" y="1022" style="font:bold 19px 'Noto Sans CJK SC',sans-serif;fill:#1b6fe0">中</text>
<circle cx="1751" cy="1010" r="2.500" fill="none" stroke="#1b6fe0" stroke-width="1.500"/><path d="M1760 1011C1762 1014 1760 1018 1758 1019" fill="none" stroke="#1b6fe0" stroke-width="2.500"/>
<rect x="1780" y="1004" width="8" height="15" rx="4" fill="#1b6fe0"/><path d="M1776 1014C1776 1024 1792 1024 1792 1014M1784 1022V1026M1779 1026.500H1789" fill="none" stroke="#1b6fe0" stroke-width="1.500"/>
<rect x="1806" y="1007" width="18" height="14" rx="2" fill="#1b6fe0"/><path d="M1809 1011H1821M1809 1014H1821M1811 1018H1819" stroke="#fff" stroke-width="1.500" stroke-dasharray="2 1"/>
<path d="M1834 1007L1840 1005H1848L1854 1007L1856 1014L1851 1015V1024H1837V1015L1832 1014Z" fill="#ff5722"/>
<rect x="1867" y="1006" width="7" height="7" rx="2" fill="#1b6fe0"/><rect x="1876" y="1006" width="7" height="7" rx="2" fill="#1b6fe0"/><rect x="1867" y="1015" width="7" height="7" rx="2" fill="#1b6fe0"/><rect x="1876" y="1015" width="7" height="7" rx="2" fill="#1b6fe0"/>
<circle cx="1904" cy="1015" r="12" fill="#f4f0ea" stroke="#e4ddd4"/><path d="M1894 1011L1912 1007L1911 1015L1896 1019Z" fill="#e25a1c"/><circle cx="1901" cy="1014" r="1.500" fill="#222"/><circle cx="1907" cy="1012" r="1.500" fill="#222"/><path d="M1914 1003L1916 1007L1920 1009L1916 1011L1914 1015L1912 1011L1908 1009L1912 1007Z" fill="#ffd54a"/>
</svg>
</body></html>
